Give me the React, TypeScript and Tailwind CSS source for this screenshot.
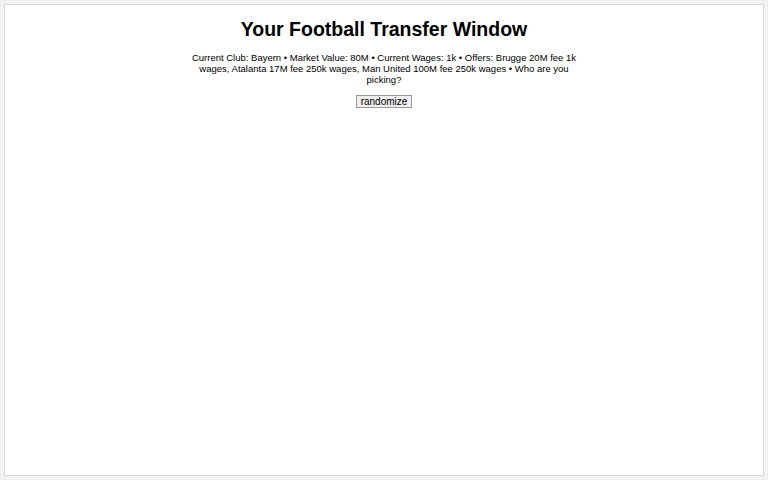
export default function App() {
  return (
    <div className="h-[480px] w-[768px] bg-[#f2f2f2] p-[4px]" style={{ fontFamily: '"Liberation Sans", Arial, sans-serif' }}>
      <div className="flex h-full flex-col items-center border border-[#dcdcdc] bg-white pt-[14px] text-black">
        <h1 className="text-[19.5px] font-bold leading-[20px]">Your Football Transfer Window</h1>
        <p className="mt-[13px] w-[390px] text-center text-[9.5px] leading-[11px]">
          Current Club: Bayern • Market Value: 80M • Current Wages: 1k • Offers: Brugge 20M fee 1k wages, Atalanta 17M fee 250k wages, Man United 100M fee 250k wages • Who are you picking?
        </p>
        <button className="mt-[10px] border border-[#999] bg-[#efefef] px-[4px] text-[10px] leading-[11px]">
          randomize
        </button>
      </div>
    </div>
  );
}
